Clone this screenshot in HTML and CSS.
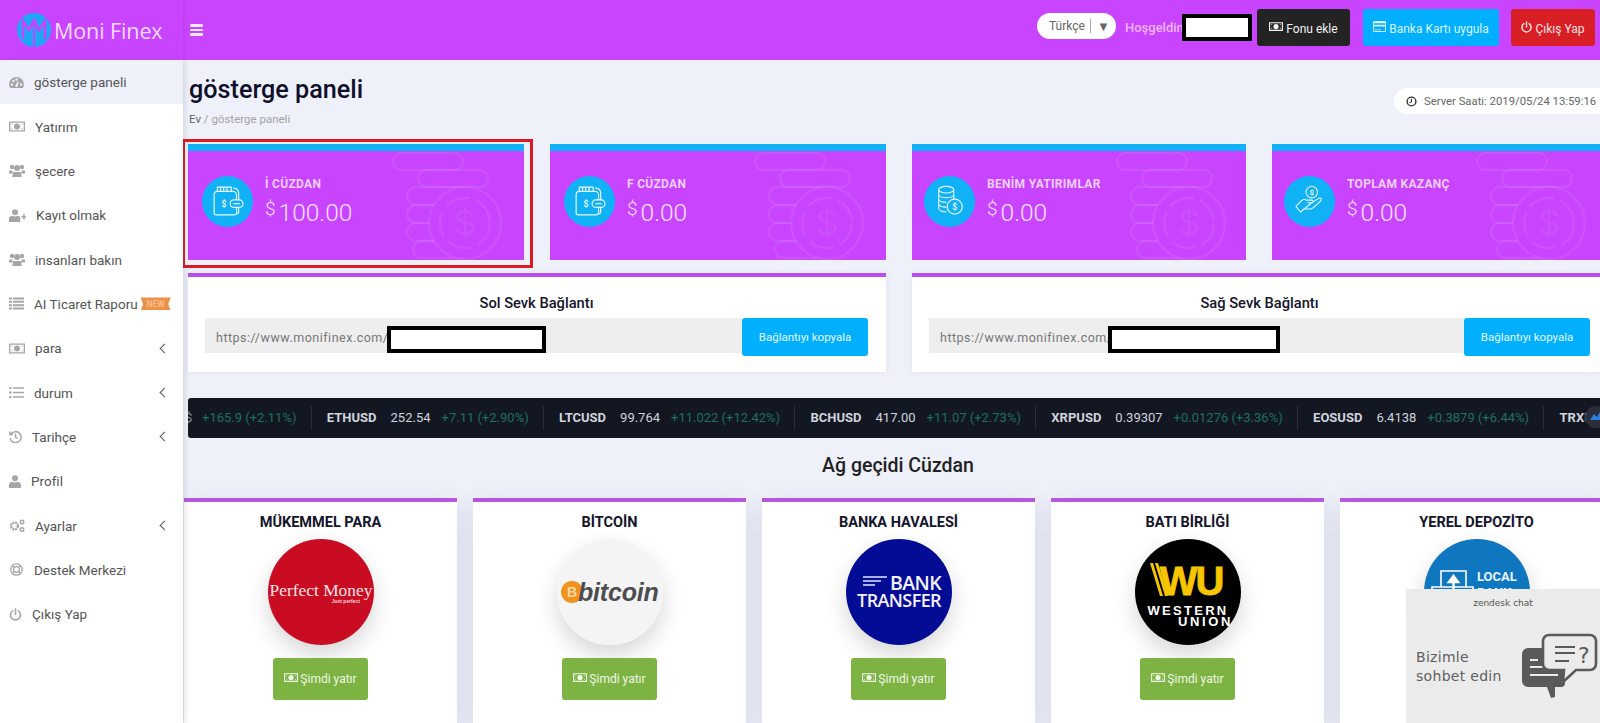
FILE: index.html
```html
<!DOCTYPE html>
<html lang="tr">
<head>
<meta charset="utf-8">
<title>Moni Finex</title>
<link rel="stylesheet" href="styles.css">
</head>
<body>
<svg class="defs" aria-hidden="true">
  <symbol id="i-gauge" viewBox="0 0 16 14"><path fill="currentColor" d="M8 1a8 8 0 0 0-8 8c0 1.6.4 3 1.2 4h13.6c.8-1 1.2-2.4 1.2-4a8 8 0 0 0-8-8zM3 10.400a1.300 1.300 0 1 1 0-2.600 1.300 1.300 0 0 1 0 2.600zm1.700-3.700a1.300 1.300 0 1 1 0-2.600 1.300 1.300 0 0 1 0 2.600zM8 5.100a1.300 1.300 0 1 1 0-2.600 1.300 1.300 0 0 1 0 2.600zm1.400 5.700a1.700 1.700 0 0 1-3 .2l3-5.600.8.300zm3.600-.4a1.300 1.300 0 1 1 0-2.600 1.300 1.300 0 0 1 0 2.600z"/></symbol>
  <symbol id="i-money" viewBox="0 0 16 12"><path fill="currentColor" fill-rule="evenodd" d="M0 1h16v10H0zm1.300 1.200v7.600h13.400V2.200zM8 3a3 3 0 1 1 0 6 3 3 0 0 1 0-6zM2.500 3.300h1.500L2.500 4.800zm11 0v1.500L12 3.300zm-11 5.400h1.500L2.500 7.200zm11 0V7.200L12 8.700z"/></symbol>
  <symbol id="i-users" viewBox="0 0 16 13"><g fill="currentColor"><circle cx="3" cy="3" r="2.200"/><circle cx="13" cy="3" r="2.200"/><circle cx="8" cy="4" r="3"/><path d="M0 6.500h3.500c-.2 1-.1 2 .5 3H0zM16 6.500h-3.500c.2 1 .1 2-.5 3h4zM4.200 8h7.600l1 5H3.200z"/></g></symbol>
  <symbol id="i-userplus" viewBox="0 0 17 13"><g fill="currentColor"><circle cx="6" cy="3.200" r="3"/><path d="M0 13V9.500C0 7.500 2 7 3.500 6.800c1.500.8 3.500.8 5 0 1 .2 2 .5 2.700 1.200v5z"/><path d="M12.500 7h1.700V5h1.500v2H17v1.500h-1.300v2h-1.500v-2h-1.700z"/></g></symbol>
  <symbol id="i-list" viewBox="0 0 15 12"><path fill="currentColor" d="M0 0h3v2H0zm4 0h11v2H4zM0 3.300h3v2H0zm4 0h11v2H4zM0 6.700h3v2H0zm4 0h11v2H4zM0 10h3v2H0zm4 0h11v2H4z"/></symbol>
  <symbol id="i-listul" viewBox="0 0 15 12"><g fill="currentColor"><circle cx="1.300" cy="1.500" r="1.300"/><circle cx="1.300" cy="6" r="1.300"/><circle cx="1.300" cy="10.500" r="1.300"/><path d="M4 .8h11v1.400H4zm0 4.500h11v1.400H4zm0 4.500h11v1.400H4z"/></g></symbol>
  <symbol id="i-history" viewBox="0 0 13 13"><path fill="none" stroke="currentColor" stroke-width="1.500" d="M2 4a5.500 5.500 0 1 1-.9 4M1 1.500V4.500h3M6.500 3.500v3.500l2 1.300"/></symbol>
  <symbol id="i-user" viewBox="0 0 12 13"><g fill="currentColor"><circle cx="6" cy="3.200" r="3"/><path d="M0 13v-3c0-2 1.800-3 3.300-3.200 1.600 1 3.800 1 5.400 0C10.200 7 12 8 12 10v3z"/></g></symbol>
  <symbol id="i-cogs" viewBox="0 0 16 13"><g fill="none" stroke="currentColor"><circle cx="5.500" cy="7" r="3.400" stroke-width="2.400" stroke-dasharray="2 .7"/><circle cx="13" cy="3" r="1.800" stroke-width="1.400"/><circle cx="13" cy="10.500" r="1.800" stroke-width="1.400"/></g></symbol>
  <symbol id="i-support" viewBox="0 0 15 15"><g fill="none" stroke="currentColor" stroke-width="1.500"><circle cx="7.500" cy="7.500" r="6.600"/><circle cx="7.500" cy="7.500" r="3.400"/><path d="M3 3l2.200 2.200M12 3 9.800 5.200M3 12l2.200-2.200M12 12 9.800 9.800"/></g></symbol>
  <symbol id="i-power" viewBox="0 0 13 14"><path fill="none" stroke="currentColor" stroke-width="1.700" stroke-linecap="round" d="M6.500 1v6M3.400 3a5.400 5.400 0 1 0 6.200 0"/></symbol>
  <symbol id="i-card" viewBox="0 0 14 12"><path fill="currentColor" fill-rule="evenodd" d="M1 0h12a1 1 0 0 1 1 1v10a1 1 0 0 1-1 1H1a1 1 0 0 1-1-1V1a1 1 0 0 1 1-1zm0 2.500V4h12V2.500zM1 6v5h12V6zm1 3h2.500v1H2zm3.500 0H8v1H5.500z"/></symbol>
  <symbol id="i-wallet" viewBox="0 0 30 30"><g fill="none" stroke="currentColor" stroke-width="1.100" stroke-linejoin="round"><path d="M2 9c0-2 1-3 3-3h15c1.500 0 3 1.500 3 3v17c0 1-1 2-2 2H4c-1 0-2-1-2-2z"/><path d="M5 6V2h13v4M8 2v4M11 2v4M14 2v4"/><path d="M20 3c3 0 5 2 5 4v7M25 21v4c0 1-1 2-2 2"/><rect x="17" y="14" width="12" height="7" rx="3.500" fill="#11b1f5"/><path d="M20 17.500h6"/></g><text x="9" y="21" class="wallet-dollar">$</text></symbol>
  <symbol id="i-coins" viewBox="0 0 30 34"><g fill="none" stroke="currentColor" stroke-width="1.200"><ellipse cx="11" cy="5" rx="8" ry="3.500"/><path d="M3 5v5c0 2 3.600 3.500 8 3.500S19 12 19 10V5M3 10v5c0 2 3.600 3.500 8 3.500M3 15v5c0 2 3.600 3.500 8 3.500M3 20v5c0 2 3.600 3.500 8 3.500M19 10v6"/><circle cx="20" cy="23" r="8"/></g><text x="17.500" y="27" class="coin-dollar">$</text></symbol>
  <symbol id="i-hand" viewBox="0 0 36 36"><g fill="none" stroke="currentColor" stroke-width="1.200" stroke-linejoin="round"><circle cx="20" cy="8" r="6.500"/><path d="M2 24l6-6c2-2 4-2 6-1h6c2 0 2 3 0 3h-5M20 20l8-5c2-1 4 1 2 3l-9 8c-1 1-2 1-3 1h-7l-3 3z"/><path d="M2 24l6 7"/></g><text x="17.500" y="11.500" class="coin-dollar">$</text></symbol>
  <symbol id="i-coinstack" viewBox="0 0 150 116"><g fill="none" stroke="currentColor" stroke-width="2.500"><rect x="5" y="9" width="70" height="17" rx="8.500"/><rect x="30" y="26" width="70" height="17" rx="8.500"/><rect x="19" y="43" width="70" height="18" rx="9"/><rect x="19" y="61" width="60" height="18" rx="9"/><rect x="19" y="79" width="60" height="18" rx="9"/><rect x="25" y="97" width="60" height="17" rx="8.500"/><circle cx="77" cy="79" r="36" fill="#c944ff"/><circle cx="77" cy="79" r="25" stroke-dasharray="26 6"/></g><text x="67" y="92" class="stack-dollar">$</text></symbol>
</svg>

<div class="app">
  <header class="topbar">
    <a class="brand">
      <svg class="brand-mark" viewBox="0 0 34 34"><circle cx="17" cy="17" r="17" fill="#1ea7f5"/><path d="M6 26V8l6 9 5-10 5 10 6-9v18" fill="none" stroke="#c944ff" stroke-width="2.500"/><path d="M17 7v27" stroke="#c944ff" stroke-width="2"/></svg>
      <span class="brand-name">Moni Finex</span>
    </a>
    <button class="burger" aria-label="menu"><span></span><span></span><span></span></button>
    <div class="topnav">
      <div class="lang"><span class="lang-name">Türkçe</span><span class="lang-arrow">▼</span></div>
      <span class="hello">Hoşgeldin</span>
      <span class="redact redact-name"></span>
      <a class="topbtn topbtn-dark"><svg class="ico-money"><use href="#i-money"/></svg>Fonu ekle</a>
      <a class="topbtn topbtn-blue"><svg class="ico-card"><use href="#i-card"/></svg>Banka Kartı uygula</a>
      <a class="topbtn topbtn-red"><svg class="ico-power"><use href="#i-power"/></svg>Çıkış Yap</a>
    </div>
  </header>

  <div class="body-row">
    <nav class="sidebar">
      <a class="nav-item is-active"><svg class="ni w15"><use href="#i-gauge"/></svg><span>gösterge paneli</span></a>
      <a class="nav-item"><svg class="ni w16"><use href="#i-money"/></svg><span>Yatırım</span></a>
      <a class="nav-item"><svg class="ni w16"><use href="#i-users"/></svg><span>şecere</span></a>
      <a class="nav-item"><svg class="ni w17"><use href="#i-userplus"/></svg><span>Kayıt olmak</span></a>
      <a class="nav-item"><svg class="ni w16"><use href="#i-users"/></svg><span>insanları bakın</span></a>
      <a class="nav-item"><svg class="ni w15"><use href="#i-list"/></svg><span>AI Ticaret Raporu</span><em class="new">NEW</em></a>
      <a class="nav-item has-sub"><svg class="ni w16"><use href="#i-money"/></svg><span>para</span><i class="chev"></i></a>
      <a class="nav-item has-sub"><svg class="ni w15"><use href="#i-listul"/></svg><span>durum</span><i class="chev"></i></a>
      <a class="nav-item has-sub"><svg class="ni w13"><use href="#i-history"/></svg><span>Tarihçe</span><i class="chev"></i></a>
      <a class="nav-item"><svg class="ni w12"><use href="#i-user"/></svg><span>Profil</span></a>
      <a class="nav-item has-sub"><svg class="ni w16"><use href="#i-cogs"/></svg><span>Ayarlar</span><i class="chev"></i></a>
      <a class="nav-item"><svg class="ni w15"><use href="#i-support"/></svg><span>Destek Merkezi</span></a>
      <a class="nav-item"><svg class="ni w13"><use href="#i-power"/></svg><span>Çıkış Yap</span></a>
    </nav>

    <main class="main">
      <div class="page-head">
        <div>
          <h1>gösterge paneli</h1>
          <p class="crumb"><b>Ev</b> / gösterge paneli</p>
        </div>
        <div class="server-time"><svg class="ico-clock" viewBox="0 0 12 12"><circle cx="6" cy="6" r="4.800" fill="none" stroke="currentColor" stroke-width="1.500"/><path d="M6 3v3.300L4 7.500" fill="none" stroke="currentColor" stroke-width="1.200"/></svg>Server Saati: 2019/05/24 13:59:16</div>
      </div>

      <section class="stats">
        <article class="stat is-marked">
          <svg class="stat-bg"><use href="#i-coinstack"/></svg>
          <span class="stat-icon"><svg class="si"><use href="#i-wallet"/></svg></span>
          <div class="stat-text"><h3>İ CÜZDAN</h3><p><sup>$</sup>100.00</p></div>
        </article>
        <article class="stat">
          <svg class="stat-bg"><use href="#i-coinstack"/></svg>
          <span class="stat-icon"><svg class="si"><use href="#i-wallet"/></svg></span>
          <div class="stat-text"><h3>F CÜZDAN</h3><p><sup>$</sup>0.00</p></div>
        </article>
        <article class="stat">
          <svg class="stat-bg"><use href="#i-coinstack"/></svg>
          <span class="stat-icon"><svg class="si"><use href="#i-coins"/></svg></span>
          <div class="stat-text"><h3>BENİM YATIRIMLAR</h3><p><sup>$</sup>0.00</p></div>
        </article>
        <article class="stat">
          <svg class="stat-bg"><use href="#i-coinstack"/></svg>
          <span class="stat-icon"><svg class="si"><use href="#i-hand"/></svg></span>
          <div class="stat-text"><h3>TOPLAM KAZANÇ</h3><p><sup>$</sup>0.00</p></div>
        </article>
      </section>

      <section class="links">
        <div class="link-card">
          <h4>Sol Sevk Bağlantı</h4>
          <div class="link-row">
            <div class="link-field"><span>https://www.monifinex.com/</span><i class="redact redact-left"></i></div>
            <a class="copy">Bağlantıyı kopyala</a>
          </div>
        </div>
        <div class="link-card">
          <h4>Sağ Sevk Bağlantı</h4>
          <div class="link-row">
            <div class="link-field"><span>https://www.monifinex.com/</span><i class="redact redact-right"></i></div>
            <a class="copy">Bağlantıyı kopyala</a>
          </div>
        </div>
      </section>

      <section class="ticker">
        <div class="ticker-track">
          <div class="tick tick-first"><span class="cut">$</span><em>+165.9 (+2.11%)</em></div>
          <div class="tick"><b>ETHUSD</b><span>252.54</span><em>+7.11 (+2.90%)</em></div>
          <div class="tick"><b>LTCUSD</b><span>99.764</span><em>+11.022 (+12.42%)</em></div>
          <div class="tick"><b>BCHUSD</b><span>417.00</span><em>+11.07 (+2.73%)</em></div>
          <div class="tick"><b>XRPUSD</b><span>0.39307</span><em>+0.01276 (+3.36%)</em></div>
          <div class="tick"><b>EOSUSD</b><span>6.4138</span><em>+0.3879 (+6.44%)</em></div>
          <div class="tick"><b>TRXUSD</b></div>
        </div>
        <span class="tv-badge"><svg viewBox="0 0 14 10"><path d="M0 9l4-6 3 3 3-5 4 6v2H0z" fill="#2f7fe0"/></svg></span>
      </section>

      <h2 class="section-title">Ağ geçidi Cüzdan</h2>

      <section class="gateways">
        <article class="gate">
          <h3>MÜKEMMEL PARA</h3>
          <svg class="gate-logo" viewBox="0 0 106 106"><circle cx="53" cy="53" r="53" fill="#c90c22"/><text x="53" y="57" class="l-pm">Perfect Money</text><text x="92" y="64" class="l-pm2">Just perfect</text></svg>
          <a class="pay"><svg class="ico-money"><use href="#i-money"/></svg>Şimdi yatır</a>
        </article>
        <article class="gate">
          <h3>BİTCOİN</h3>
          <svg class="gate-logo" viewBox="0 0 106 106"><circle cx="53" cy="53" r="53" fill="#f4f4f4"/><circle cx="15" cy="53" r="11" fill="#f0921b"/><text x="15" y="58" class="l-bb">B</text><text x="21" y="62" class="l-bt">bitcoin</text></svg>
          <a class="pay"><svg class="ico-money"><use href="#i-money"/></svg>Şimdi yatır</a>
        </article>
        <article class="gate">
          <h3>BANKA HAVALESİ</h3>
          <svg class="gate-logo" viewBox="0 0 106 106"><circle cx="53" cy="53" r="53" fill="#040b94"/><path d="M17 38h24M17 42h18M17 46h12" stroke="#e6e6ff" stroke-width="1.500"/><text x="95" y="51" class="l-bk l-bk-big">BANK</text><text x="95" y="68" class="l-bk">TRANSFER</text></svg>
          <a class="pay"><svg class="ico-money"><use href="#i-money"/></svg>Şimdi yatır</a>
        </article>
        <article class="gate">
          <h3>BATI BİRLİĞİ</h3>
          <svg class="gate-logo" viewBox="0 0 106 106"><circle cx="53" cy="53" r="53" fill="#000"/><path d="M15 24h3l10 33h-3zM20 24h3l10 33h-3z" fill="#f7c600"/><text x="56" y="56" class="l-wu">WU</text><text x="53" y="76" class="l-w1">WESTERN</text><text x="98" y="87" class="l-w2">UNION</text></svg>
          <a class="pay"><svg class="ico-money"><use href="#i-money"/></svg>Şimdi yatır</a>
        </article>
        <article class="gate">
          <h3>YEREL DEPOZİTO</h3>
          <svg class="gate-logo" viewBox="0 0 106 106"><circle cx="53" cy="53" r="53" fill="#0e77bf"/><path d="M17 32h25v16H17zM8 48h41v20H8z" fill="none" stroke="#fff" stroke-width="1.600"/><path d="M29.500 62V38M25 43l4.500-6 4.500 6z" stroke="#fff" stroke-width="2.500" fill="#fff"/><text x="53" y="42" class="l-lb">LOCAL</text><text x="53" y="58" class="l-lb">BANK</text></svg>
          <a class="pay"><svg class="ico-money"><use href="#i-money"/></svg>Şimdi yatır</a>
        </article>
      </section>
    </main>
  </div>

  <aside class="chat">
    <div class="chat-brand">zendesk chat</div>
    <div class="chat-body">
      <p>Bizimle<br>sohbet edin</p>
      <svg class="chat-icon" viewBox="0 0 76 66"><path d="M6 15h33a4 4 0 0 1 4 4v31a4 4 0 0 1-4 4h-6v10l-4 1-4-11H6a6 6 0 0 1-6-6V21a6 6 0 0 1 6-6z" fill="#5a5a5a"/><path d="M8 27h8M8 34h13M8 42h28" stroke="#ebebeb" stroke-width="2.200"/><path d="M27 2h41a6 6 0 0 1 6 6v23a6 6 0 0 1-6 6H54L41 49l1-12H27a6 6 0 0 1-6-6V8a6 6 0 0 1 6-6z" fill="#ebebeb" stroke="#5a5a5a" stroke-width="2.600"/><path d="M33 14h20M33 20h20M33 28h14" stroke="#5a5a5a" stroke-width="2.200"/><text x="56" y="30" class="chat-q">?</text></svg>
    </div>
  </aside>
</div>
</body>
</html>
```

FILE: styles.css
```css
* { box-sizing: border-box; }
html, body { margin: 0; padding: 0; height: 100%; overflow: hidden; }
body { font-family: Roboto, "Liberation Sans", sans-serif; background: #eef1fa; color: #111; }
a { text-decoration: none; color: inherit; }
h1, h2, h3, h4, p { margin: 0; }
.defs { position: absolute; width: 0; height: 0; }

.app { width: 1600px; height: 723px; display: flex; flex-direction: column; overflow: hidden; }

/* top bar */
.topbar { height: 60px; flex: none; background: #c944ff; display: flex; align-items: center; }
.brand { width: 183px; flex: none; display: flex; align-items: center; padding-left: 17px; gap: 3px; height: 60px; box-shadow: 1px 0 3px rgba(100, 0, 140, .12); }
.brand-mark { width: 34px; height: 34px; }
.brand-name { font-family: "Open Sans", sans-serif; font-size: 21.500px; color: #f4dcff; white-space: nowrap; letter-spacing: -.1px; }
.burger { background: none; border: 0; padding: 0; margin-left: 7px; width: 13px; display: flex; flex-direction: column; gap: 2px; }
.burger span { display: block; height: 2.500px; background: #f6e6ff; border-radius: 1px; }
.topnav { margin-left: auto; padding-right: 5px; display: flex; align-items: center; height: 60px; }
.lang { width: 79px; height: 26px; margin-top: -8px; background: #fff; border-radius: 13px; display: flex; align-items: center; padding-left: 12px; font-size: 12px; color: #666; }
.lang-name { padding-right: 5px; border-right: 1px solid #aaa; line-height: 14px; }
.lang-arrow { margin-left: 6px; font-size: 13px; color: #666; }
.hello { margin-left: 9px; width: 57px; font-size: 13px; font-weight: 500; color: #efb6ff; margin-top: -5px; white-space: nowrap; }
.redact { display: block; background: #fff; border: 4px solid #000; }
.redact-name { width: 70px; height: 27px; margin-top: -5px; margin-right: 5px; }
.topbtn { height: 37px; margin-top: -5px; padding-top: 3px; display: flex; align-items: center; justify-content: center; border-radius: 3px; font-size: 12px; font-weight: 400; color: #f2f2f2; white-space: nowrap; }
.topbtn svg { margin-right: 3px; margin-top: -5px; }
.topbtn-dark { width: 93px; background: #232323; margin-right: 13px; }
.topbtn-blue { width: 136px; background: #00b0ff; margin-right: 12px; color: #d9f4ff; }
.topbtn-red { width: 84px; background: #d91f26; color: #fbe3e3; }
.ico-money { width: 14px; height: 11px; }
.ico-card { width: 13px; height: 11px; }
.ico-power { width: 11px; height: 12px; }

.body-row { flex: 1; display: flex; min-height: 0; }

/* sidebar */
.sidebar { width: 183px; flex: none; background: #fff; box-shadow: 2px 0 5px rgba(60, 70, 110, .16); position: relative; z-index: 2; }
.nav-item { height: 44.350px; display: flex; align-items: center; padding-left: 9px; font-size: 13.500px; color: #555; white-space: nowrap; }
.nav-item.is-active { background: #eef1fa; }
.ni { height: 13px; margin-right: 10px; flex: none; color: #a6a6a6; }
.w12 { width: 12px; } .w13 { width: 13px; } .w15 { width: 15px; } .w16 { width: 16px; } .w17 { width: 17px; }
.new { margin-left: 3px; width: 30px; height: 13px; background: #ee9148; color: #f9bd8c; font-style: normal; font-size: 8.500px; font-weight: 700; display: flex; align-items: center; justify-content: center; clip-path: polygon(0 0, 100% 0, 92% 50%, 100% 100%, 0 100%, 8% 50%); }
.chev { margin-left: auto; margin-right: 15px; width: 7px; height: 7px; border-left: 1px solid #555; border-bottom: 1px solid #555; transform: rotate(45deg); }

/* main */
.main { flex: 1; min-width: 0; overflow: hidden; background: #eef1fa; }
.page-head { height: 84px; display: flex; justify-content: space-between; padding: 15px 0 0 6px; }
.page-head h1 { font-size: 25.200px; font-weight: 500; color: #10102a; line-height: 30px; }
.crumb { margin-top: 7px; font-size: 11.500px; color: #a3a3a3; line-height: 14px; }
.crumb b { font-weight: 400; color: #666; }
.server-time { height: 26px; width: 206px; margin-top: 13px; background: #fff; border-radius: 13px 0 0 13px; display: flex; align-items: center; padding-left: 12px; font-size: 11.300px; color: #666; white-space: nowrap; }
.ico-clock { width: 11px; height: 11px; color: #333; margin-right: 7px; flex: none; }

/* stat cards */
.stats { display: grid; grid-template-columns: 336px 336px 334px 336px; column-gap: 26px; padding-left: 5px; width: 1500px; }
.stat { position: relative; height: 116px; background: #c944ff; border-top: 7px solid #11b1f5; display: flex; align-items: center; padding: 0 0 9px 14px; }
.stat:nth-child(n+3) { padding-left: 12px; }
.is-marked::after { content: ""; position: absolute; inset: -12px -9px -8px -6px; border: 3px solid #e01a22; }
.stat-bg { position: absolute; left: 200px; top: -7px; width: 150px; height: 116px; color: rgba(255, 255, 255, .07); }
.stack-dollar { font-family: "Liberation Sans", sans-serif; font-size: 36px; fill: rgba(255, 255, 255, .07); }
.stat-icon { width: 51px; height: 51px; flex: none; border-radius: 50%; background: #11b1f5; display: flex; align-items: center; justify-content: center; color: #e8f8ff; }
.si { width: 32px; height: 32px; }
.wallet-dollar { font-family: Roboto, sans-serif; font-weight: 700; font-size: 8px; fill: currentColor; }
.coin-dollar { font-family: Roboto, sans-serif; font-weight: 700; font-size: 9px; fill: currentColor; }
.stat-text { margin-left: 12px; margin-top: 4px; color: #f6e2ff; }
.stat-text h3 { font-size: 12px; font-weight: 700; letter-spacing: .3px; color: #f1cfff; line-height: 14px; }
.stat-text p { margin-top: 6px; font-size: 24.500px; font-weight: 300; line-height: 32px; display: flex; align-items: flex-start; }
.stat-text sup { font-size: 19px; line-height: 24px; margin-right: 3px; }

/* link cards */
.links { display: grid; grid-template-columns: 698px 696px; column-gap: 26px; padding-left: 5px; margin-top: 13px; width: 1500px; }
.link-card { height: 99px; background: #fff; border-top: 4px solid #b84fe6; padding: 16px 18px 0 17px; box-shadow: 0 0 6px rgba(60, 70, 110, .08); }
.link-card h4 { text-align: center; font-size: 14.700px; font-weight: 500; color: #14142a; line-height: 20px; margin-bottom: 5px; }
.link-row { display: flex; align-items: flex-start; }
.link-field { flex: 1; height: 35px; background: #eee; display: flex; align-items: center; padding-left: 11px; font-size: 12.500px; color: #777; letter-spacing: .5px; white-space: nowrap; }
.link-field span { margin-top: 3px; }
.redact-left { width: 159px; height: 27px; margin-top: 8px; margin-left: -1px; }
.redact-right { width: 172px; height: 27px; margin-top: 8px; margin-left: -4px; }
.copy { width: 126px; height: 38px; flex: none; background: #00b0ff; border-radius: 3px; display: flex; align-items: center; justify-content: center; font-size: 11.500px; color: #e4f7ff; }

/* ticker */
.ticker { position: relative; margin: 26px 0 0 5px; width: 1500px; height: 40px; background: #131722; border-radius: 3px; overflow: hidden; }
.ticker-track { display: flex; align-items: center; height: 40px; padding-left: 14px; white-space: nowrap; font-size: 13px; }
.tick { display: flex; padding-right: 14.200px; margin-right: 15.200px; border-right: 1px solid #2a2e39; line-height: 24px; }
.tick b { font-weight: 700; color: #d1d4dc; margin-right: 14px; }
.tick span { color: #d1d4dc; margin-right: 11px; }
.tick .cut { margin-left: -17px; margin-right: 0; width: 17px; color: #8a8e99; }
.tick em { font-style: normal; color: #1c6f5e; }
.tv-badge { position: absolute; left: 1397px; top: 8px; width: 24px; height: 22px; border-radius: 11px; background: #2a2e39; padding: 5px 5px; display: block; }
.tv-badge svg { display: block; width: 14px; height: 10px; }

.section-title { margin-top: 16px; width: 1430px; text-align: center; font-size: 19.500px; font-weight: 500; color: #222; line-height: 24px; }

/* gateways */
.gateways { display: grid; grid-template-columns: repeat(5, 273px); column-gap: 16px; padding-left: 1px; margin-top: 20px; width: 1500px; }
.gate { height: 230px; background: #fff; border-top: 4px solid #b458dc; display: flex; flex-direction: column; align-items: center; padding-top: 12px; box-shadow: 0 8px 24px rgba(70, 80, 120, .14); }
.gate h3 { font-size: 14.500px; font-weight: 700; color: #14142a; line-height: 18px; white-space: nowrap; }
.gate-logo { width: 106px; height: 106px; margin-top: 7px; border-radius: 50%; box-shadow: 0 10px 22px rgba(0, 0, 0, .16); flex: none; overflow: visible; }
.pay { margin-top: 13px; width: 95px; height: 42px; background: #7cb342; border-radius: 3px; display: flex; align-items: center; justify-content: center; font-size: 12px; color: #f0f7e6; white-space: nowrap; }
.pay svg { margin-right: 2px; margin-top: -3px; }
.l-pm { font-family: "Liberation Serif", serif; font-size: 17.400px; fill: #fbe3e6; text-anchor: middle; }
.l-pm2 { font-family: "Liberation Sans", sans-serif; font-size: 5px; font-weight: 700; fill: #f9d5da; text-anchor: end; }
.l-bb { font-family: "Liberation Sans", sans-serif; font-size: 14px; font-weight: 700; fill: #fbd9a6; text-anchor: middle; }
.l-bt { font-family: "Liberation Sans", sans-serif; font-size: 25px; font-weight: 700; font-style: italic; fill: #4d4d4f; letter-spacing: -.2px; }
.l-bk { font-family: "Open Sans", sans-serif; font-size: 18px; font-weight: 600; fill: #f2f2ff; text-anchor: end; letter-spacing: -.6px; }
.l-bk-big { font-size: 19.500px; }
.l-wu { font-family: "Liberation Sans", sans-serif; font-size: 40px; font-weight: 700; fill: #f7c600; stroke: #f7c600; stroke-width: .8px; text-anchor: middle; letter-spacing: -2px; }
.l-w1 { font-family: "Liberation Sans", sans-serif; font-size: 13px; font-weight: 700; fill: #fff; text-anchor: middle; letter-spacing: 2.300px; }
.l-w2 { font-family: "Liberation Sans", sans-serif; font-size: 13px; font-weight: 700; fill: #fff; text-anchor: end; letter-spacing: 2.600px; }
.l-lb { font-family: Roboto, sans-serif; font-size: 13px; font-weight: 700; fill: #e8f4ff; }

/* chat widget */
.chat { position: fixed; right: 0; bottom: 0; width: 194px; height: 134px; background: #ebebeb; z-index: 5; color: #555; }
.chat-brand { text-align: center; padding-top: 8px; font-family: "DejaVu Sans", sans-serif; font-size: 9px; line-height: 12px; color: #555; }
.chat-body { position: relative; padding: 39px 0 0 10px; }
.chat-body p { font-family: "DejaVu Sans", sans-serif; font-size: 14px; line-height: 18.500px; letter-spacing: .3px; color: #5f5f5f; }
.chat-icon { position: absolute; left: 116px; top: 24px; width: 76px; height: 66px; }
.chat-q { font-family: "DejaVu Sans", sans-serif; font-size: 22px; fill: #5a5a5a; }
```
